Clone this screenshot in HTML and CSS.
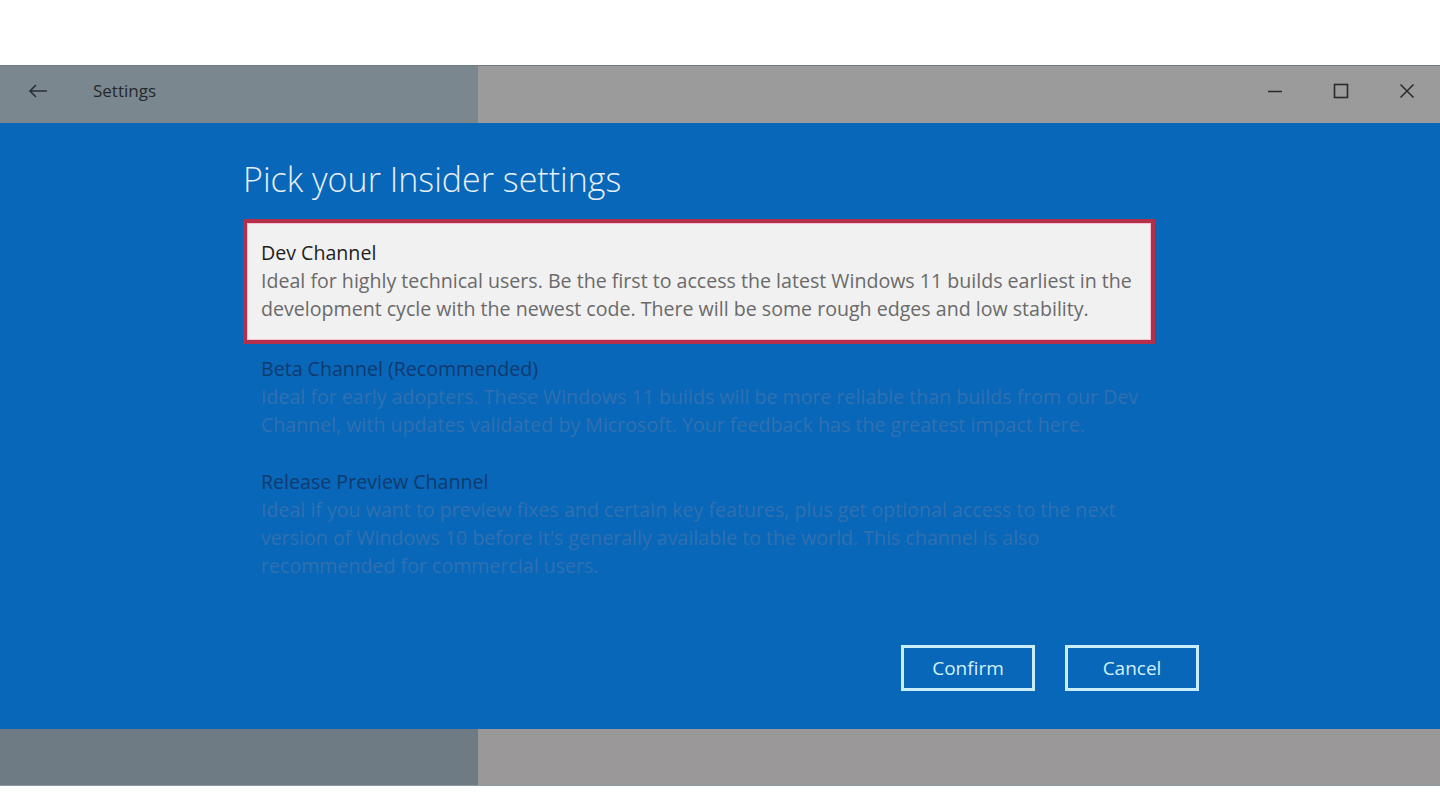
FILE: index.html
```html
<!DOCTYPE html>
<html>
<head>
<meta charset="utf-8">
<link rel="stylesheet" href="styles.css">
</head>
<body>
<div class="top-space"></div>
<div class="window">
  <div class="titlebar">
    <div class="tb-left">
      <svg class="back" width="22" height="16" viewBox="0 0 22 16"><path d="M20 8H3M9 2L3 8l6 6" fill="none" stroke="#2a2f33" stroke-width="1.6"/></svg>
      <span class="tb-title">Settings</span>
    </div>
    <div class="tb-right">
      <div class="ctl"><svg width="16" height="16" viewBox="0 0 16 16"><path d="M1 8.5h14" stroke="#2a2a2a" stroke-width="1.5"/></svg></div>
      <div class="ctl"><svg width="16" height="16" viewBox="0 0 16 16"><rect x="1.5" y="1.5" width="13" height="13" fill="none" stroke="#2a2a2a" stroke-width="1.6"/></svg></div>
      <div class="ctl"><svg width="16" height="16" viewBox="0 0 16 16"><path d="M1.5 1.5l13 13M14.5 1.5l-13 13" stroke="#2a2a2a" stroke-width="1.5"/></svg></div>
    </div>
  </div>
  <div class="content">
    <h1 class="heading">Pick your Insider settings</h1>
    <div class="option selected">
      <div class="opt-title">Dev Channel</div>
      <div class="opt-desc">Ideal for highly technical users. Be the first to access the latest Windows 11 builds earliest in the<br>development cycle with the newest code. There will be some rough edges and low stability.</div>
    </div>
    <div class="option">
      <div class="opt-title">Beta Channel (Recommended)</div>
      <div class="opt-desc">Ideal for early adopters. These Windows 11 builds will be more reliable than builds from our Dev<br>Channel, with updates validated by Microsoft. Your feedback has the greatest impact here.</div>
    </div>
    <div class="option">
      <div class="opt-title">Release Preview Channel</div>
      <div class="opt-desc">Ideal if you want to preview fixes and certain key features, plus get optional access to the next<br>version of Windows 10 before it's generally available to the world. This channel is also<br>recommended for commercial users.</div>
    </div>
    <div class="actions">
      <button class="btn">Confirm</button>
      <button class="btn">Cancel</button>
    </div>
  </div>
  <div class="bottombar">
    <div class="bb-left"></div>
    <div class="bb-right"></div>
  </div>
</div>
</body>
</html>
```
FILE: styles.css
```css
html, body {
  margin: 0;
  padding: 0;
  background: #ffffff;
  font-family: "Open Sans", "Noto Sans", sans-serif;
}
.top-space {
  height: 65px;
}
.window {
  border-top: 1px solid #6f7a84;
}
.titlebar {
  height: 57px;
  display: grid;
  grid-template-columns: 478px 1fr;
}
.tb-left {
  background: #7b878e;
  display: flex;
  align-items: center;
  padding-left: 27px;
  padding-bottom: 8px;
}
.back {
  margin-right: 44px;
}
.tb-title {
  font-size: 17px;
  color: #23282c;
}
.tb-right {
  background: #9b9b9b;
  display: flex;
  justify-content: flex-end;
  align-items: center;
  padding-bottom: 8px;
}
.ctl {
  width: 66px;
  display: flex;
  justify-content: center;
}
.content {
  background: #0867b8;
  height: 606px;
  box-sizing: border-box;
  padding: 0 0 0 243px;
  display: flex;
  flex-direction: column;
}
.heading {
  margin: 30px 0 14px 0;
  font-weight: 300;
  font-size: 34px;
  color: #e6eef6;
  line-height: 52px;
}
.option {
  width: 912px;
  box-sizing: border-box;
  padding: 11px 18px 18px 18px;
}
.option.selected {
  background: #f1f1f1;
  border: 4px solid #b2304c;
  box-shadow: inset 0 0 0 1px #f3c2cc;
  padding: 16px 14px 17px 14px;
}
.opt-title {
  font-size: 19.6px;
  line-height: 28px;
  color: #0f3a70;
}
.opt-desc {
  font-size: 19.6px;
  line-height: 28px;
  color: #3170b0;
  white-space: nowrap;
}
.selected .opt-title {
  color: #1e1e1e;
}
.selected .opt-desc {
  color: #6a6a6a;
}
.actions {
  display: flex;
  gap: 30px;
  margin-top: 47px;
  width: 956px;
  justify-content: flex-end;
}
.btn {
  width: 134px;
  height: 46px;
  background: transparent;
  border: 3px solid #c9eefa;
  color: #d2f1fc;
  font-family: "Open Sans", "Noto Sans", sans-serif;
  font-size: 19px;
  padding: 0;
}
.bottombar {
  height: 56px;
  display: grid;
  grid-template-columns: 478px 1fr;
  border-bottom: 1px solid #8a9aa5;
}
.bb-left {
  background: #6e7b84;
}
.bb-right {
  background: #9a9898;
}
```
